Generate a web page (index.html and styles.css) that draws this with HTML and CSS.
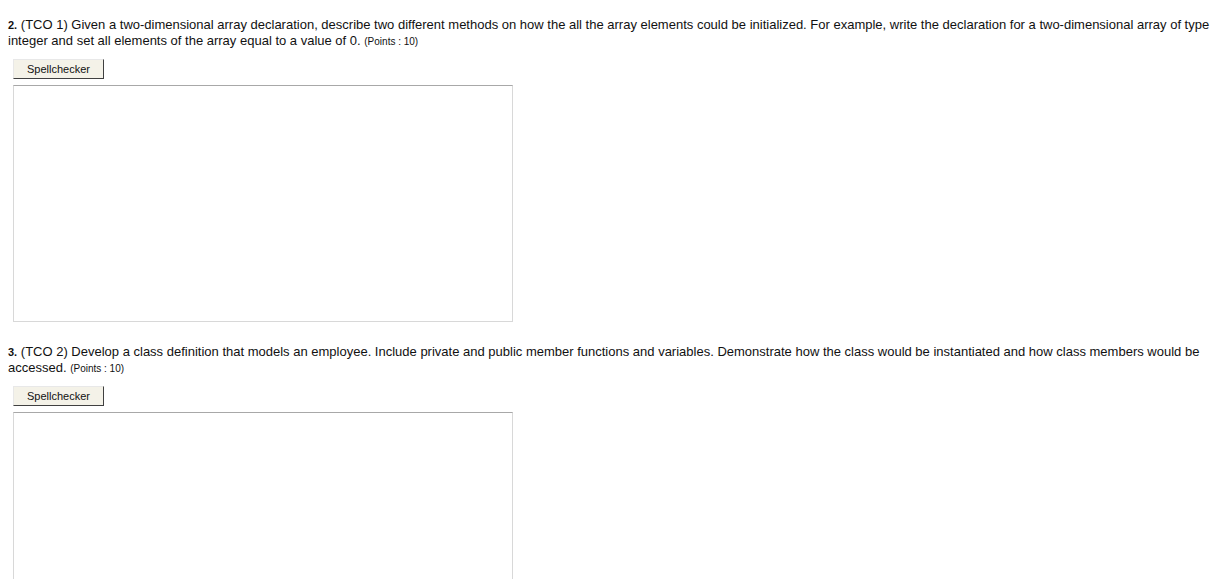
FILE: index.html
```html
<!DOCTYPE html>
<html>
<head>
<meta charset="utf-8">
<link rel="stylesheet" href="styles.css">
</head>
<body>
<div class="page">
  <div class="question">
    <p class="qtext"><b class="num">2.</b> (TCO 1) Given a two-dimensional array declaration, describe two different methods on how the all the array elements could be initialized. For example, write the declaration for a two-dimensional array of type integer and set all elements of the array equal to a value of 0. <small class="pts">(Points : 10)</small></p>
    <div class="answer">
      <button class="spell">Spellchecker</button>
      <div class="box"></div>
    </div>
  </div>
  <div class="question">
    <p class="qtext"><b class="num">3.</b> (TCO 2) Develop a class definition that models an employee. Include private and public member functions and variables. Demonstrate how the class would be instantiated and how class members would be accessed. <small class="pts">(Points : 10)</small></p>
    <div class="answer">
      <button class="spell">Spellchecker</button>
      <div class="box"></div>
    </div>
  </div>
</div>
</body>
</html>
```
FILE: styles.css
```css
html, body {
  margin: 0;
  padding: 0;
  background: #ffffff;
  overflow: hidden;
}
body {
  font-family: "Liberation Sans", Arial, sans-serif;
  color: #111111;
}
.page {
  padding: 17px 8px 0 8px;
  display: flex;
  flex-direction: column;
  gap: 22px;
}
.qtext {
  margin: 0;
  font-size: 13px;
  line-height: 16px;
}
.num {
  font-weight: bold;
  font-size: 11px;
  line-height: 10px;
}
.pts {
  font-size: 10px;
  line-height: 10px;
}
.answer {
  padding-left: 5px;
  padding-top: 10px;
  display: flex;
  flex-direction: column;
  align-items: flex-start;
  gap: 6px;
}
.spell {
  font-family: "Liberation Sans", Arial, sans-serif;
  font-size: 11px;
  color: #111111;
  width: 91px;
  height: 20px;
  padding: 0;
  background: #f4f2e8;
  border: 1px solid;
  border-color: #e8e8e8 #404040 #404040 #e8e8e8;
  box-sizing: border-box;
}
.box {
  width: 500px;
  height: 237px;
  box-sizing: border-box;
  border: 1px solid #d8d8d8;
  border-top-color: #a8a8a8;
  background: #ffffff;
}
```
